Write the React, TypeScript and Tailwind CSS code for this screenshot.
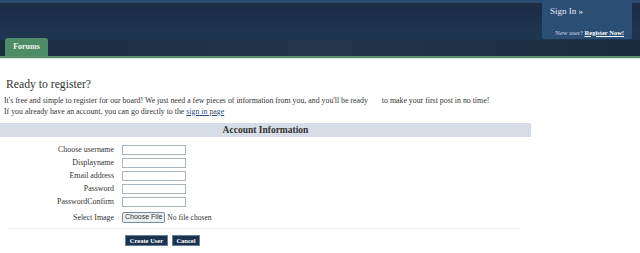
import React from 'react';

const fields = ['Choose username', 'Displayname', 'Email address', 'Password', 'PasswordConfirm'];

export default function App() {
  return (
    <div className="h-[253px] w-[640px] overflow-hidden bg-white font-['Liberation_Serif',serif] text-[#222]">
      {/* header */}
      <div className="relative h-[56px] bg-gradient-to-b from-[#1c2c44] to-[#1f3a58]">
        <div className="h-[3px] bg-[#2d4b70]" />
        <div className="absolute right-[8px] top-0 h-[39px] w-[90px] rounded-b-[2px] bg-[#2b4e74] px-[8px] pt-[5px]">
          <div className="text-[9px] text-[#e6edf5]">Sign In »</div>
          <div className="mt-[9px] text-right text-[6.5px] text-[#c8d4e2]">
            New user? <span className="font-bold text-white underline">Register Now!</span>
          </div>
        </div>
        <div className="absolute bottom-0 left-0 flex h-[16px] w-full items-end bg-gradient-to-r from-[#1c2b40] via-[#26354c] to-[#1b2a3e]">
          <div className="ml-[5px] flex h-[18px] w-[43px] items-center justify-center rounded-t-[3px] bg-[#4e8c68] text-[8px] font-bold text-[#eef5ee]">
            Forums
          </div>
        </div>
      </div>
      <div className="h-[2px] bg-[#5b8f6e]" />
      <div className="h-[1px] bg-[#d5e5da]" />

      {/* content */}
      <div className="px-[6px] pt-[20px]">
        <h1 className="text-[11.7px] leading-[12px] text-[#333]">Ready to register?</h1>
      </div>
      <div className="px-[4px] pt-[4px] text-[7.85px] leading-[11px] text-[#333]">
        <p>
          It's free and simple to register for our board! We just need a few pieces of information from you, and you'll be ready
          <span className="inline-block w-[14px]" />
          to make your first post in no time!
        </p>
        <p>
          If you already have an account, you can go directly to the{' '}
          <span className="text-[#2a4d78] underline">sign in page</span>
        </p>
      </div>

      <div className="mt-[6px] flex h-[14px] w-[531px] items-center justify-center bg-[#d6dde6] text-[9.5px] font-bold text-[#333]">
        Account Information
      </div>

      <div className="mt-[8px] flex flex-col gap-[3px] text-[7.9px] text-[#333]">
        {fields.map((f) => (
          <div key={f} className="flex h-[10px] items-center">
            <div className="w-[114px] text-right">{f}</div>
            <div className="ml-[8px] h-[10px] w-[64px] border border-[#a9b4c0] bg-white" />
          </div>
        ))}
        <div className="mt-[2px] flex h-[11px] items-center">
          <div className="w-[114px] text-right">Select Image</div>
          <div className="ml-[8px] flex h-[11px] items-center rounded-[2px] border border-[#7a8a9a] bg-[#eceff2] px-[2px] font-['Liberation_Sans',sans-serif] text-[7px]">
            Choose File
          </div>
          <div className="ml-[2px] text-[7.6px]">No file chosen</div>
        </div>
      </div>

      <div className="mx-[8px] mt-[5px] h-px w-[512px] bg-[#eef0f2]" />

      <div className="mt-[6px] flex gap-[4px] pl-[125px]">
        <div className="flex h-[11px] w-[43px] items-center justify-center border border-[#6a7f98] bg-[#1c3350] text-[6.5px] font-bold text-white">
          Create User
        </div>
        <div className="flex h-[11px] w-[28px] items-center justify-center border border-[#6a7f98] bg-[#1c3350] text-[6.5px] font-bold text-white">
          Cancel
        </div>
      </div>
    </div>
  );
}
